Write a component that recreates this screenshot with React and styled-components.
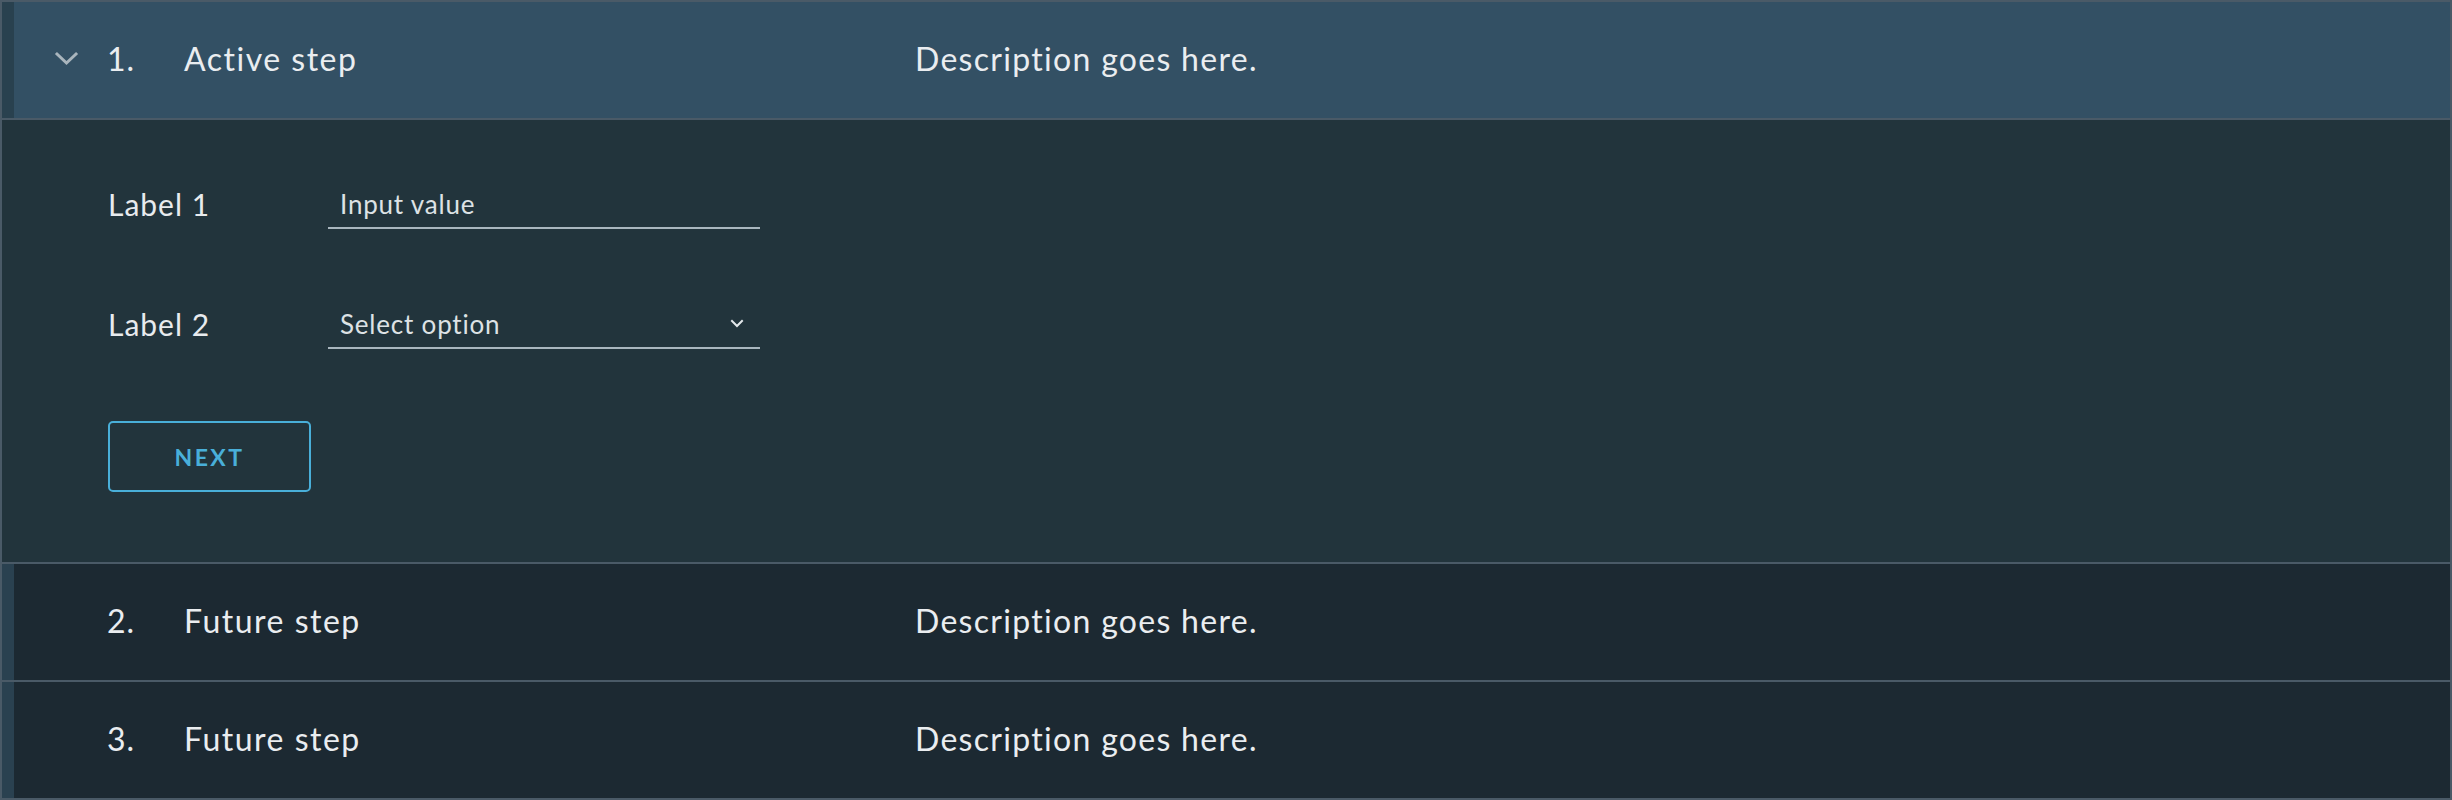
import styled, { createGlobalStyle } from 'styled-components';

const GlobalStyle = createGlobalStyle`
  html, body {
    margin: 0;
    padding: 0;
    background: #1b2a32;
  }
  * {
    box-sizing: border-box;
  }
`;

const Stepper = styled.div`
  display: flex;
  flex-direction: column;
  width: 2452px;
  height: 800px;
  border: 2px solid #4a5a67;
  font-family: Lato, 'Noto Sans', sans-serif;
  color: #eaedf0;
`;

const StepPanel = styled.div`
  display: flex;
  flex-direction: column;
  border-top: ${(p) => (p.first ? 'none' : '2px solid #4a5a67')};
`;

const StepHeader = styled.div`
  display: grid;
  grid-template-columns: 93px 77px 731px 1fr;
  align-items: center;
  height: 116px;
  padding-bottom: 3px;
  border-left: 12px solid ${(p) => (p.active ? '#29414f' : '#2a4150')};
  background-color: ${(p) => (p.active ? '#335064' : '#1c2932')};
`;

const Toggle = styled.div`
  display: flex;
  align-items: center;
  padding-left: 40px;
`;

const StepNumber = styled.span`
  font-size: 32px;
  font-weight: 400;
  letter-spacing: 1px;
`;

const StepTitle = styled.span`
  font-size: 32px;
  font-weight: 400;
  letter-spacing: 1.5px;
`;

const StepDescription = styled.span`
  font-size: 32px;
  font-weight: 400;
  letter-spacing: 1.3px;
`;

const StepContent = styled.div`
  display: flex;
  flex-direction: column;
  align-items: flex-start;
  height: 444px;
  padding: 69px 0 0 106px;
  background-color: #22343c;
  border-top: 2px solid #4a5a67;
`;

const FormRow = styled.div`
  display: flex;
  align-items: center;
  height: 40px;
  margin-bottom: ${(p) => p.gap}px;
`;

const Label = styled.label`
  width: 220px;
  padding-bottom: 11px;
  font-size: 30px;
  font-weight: 400;
  letter-spacing: 1px;
  color: #e8ebee;
`;

const Field = styled.div`
  display: flex;
  align-items: center;
  justify-content: space-between;
  width: 432px;
  height: 40px;
  padding: 0 16px 9px 12px;
  border-bottom: 2px solid #a9b6be;
  font-size: 26px;
  font-weight: 400;
  letter-spacing: 0.8px;
  color: #dde2e5;
`;

const NextButton = styled.button`
  display: flex;
  align-items: center;
  justify-content: center;
  width: 203px;
  height: 71px;
  border: 2px solid #49afd9;
  border-radius: 5px;
  background: transparent;
  color: #49afd9;
  font-family: Lato, 'Noto Sans', sans-serif;
  font-size: 23px;
  font-weight: 700;
  letter-spacing: 2.5px;
  cursor: pointer;
`;

const ChevronDown = ({ w, h, color, stroke }) => (
  <svg width={w} height={h} viewBox={`0 0 ${w} ${h}`} fill="none">
    <polyline
      points={`${stroke},${stroke} ${w / 2},${h - stroke} ${w - stroke},${stroke}`}
      stroke={color}
      strokeWidth={stroke}
      strokeLinecap="square"
    />
  </svg>
);

const steps = [
  { num: '1.', title: 'Active step', active: true },
  { num: '2.', title: 'Future step' },
  { num: '3.', title: 'Future step' },
];

const App = () => {
  return (
    <>
      <GlobalStyle />
      <Stepper>
        {steps.map((s, i) => (
          <StepPanel key={s.num} first={i === 0}>
            <StepHeader active={s.active}>
              <Toggle>
                {s.active && <ChevronDown w={25} h={15} color="#a9b5bd" stroke={3} />}
              </Toggle>
              <StepNumber>{s.num}</StepNumber>
              <StepTitle>{s.title}</StepTitle>
              <StepDescription>Description goes here.</StepDescription>
            </StepHeader>
            {s.active && (
              <StepContent>
                <FormRow gap={80}>
                  <Label>Label 1</Label>
                  <Field>Input value</Field>
                </FormRow>
                <FormRow gap={72}>
                  <Label>Label 2</Label>
                  <Field>
                    Select option
                    <ChevronDown w={14} h={9} color="#e3e8eb" stroke={2} />
                  </Field>
                </FormRow>
                <NextButton>NEXT</NextButton>
              </StepContent>
            )}
          </StepPanel>
        ))}
      </Stepper>
    </>
  );
};

export default App;
